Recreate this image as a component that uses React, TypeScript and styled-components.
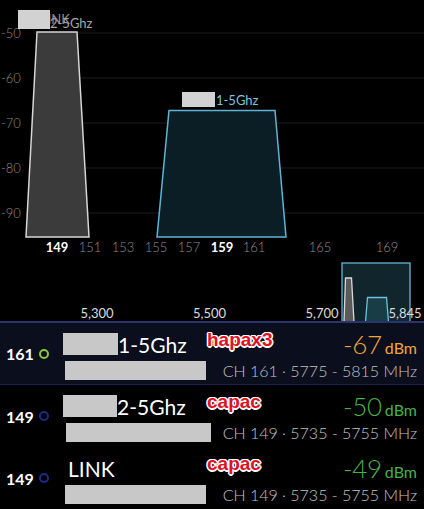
import * as React from "react";
import styled, { createGlobalStyle } from "styled-components";

const GlobalStyle = createGlobalStyle`
  html, body {
    margin: 0;
    padding: 0;
    background: #000;
  }
  body {
    font-family: "Lato", "Noto Sans", sans-serif;
    color: #fff;
  }
`;

const Screen = styled.div`
  width: 424px;
  height: 509px;
  background: #000;
  overflow: hidden;
  display: flex;
  flex-direction: column;
`;

const ChartSvg = styled.svg`
  display: block;
  flex: none;
  font-family: "Lato", "Noto Sans", sans-serif;
`;

const List = styled.div`
  display: flex;
  flex-direction: column;
`;

const Row = styled.div<{ $active?: boolean }>`
  display: grid;
  grid-template-columns: 63px 1fr;
  box-sizing: border-box;
  height: ${(p) => (p.$active ? "64px" : "62px")};
  background: ${(p) => (p.$active ? "#0b0e1c" : "#000")};
  border-top: ${(p) => (p.$active ? "2px solid #2a356f" : "none")};
  border-bottom: ${(p) => (p.$active ? "1px solid #1b2451" : "none")};
`;

const Channel = styled.div`
  display: flex;
  align-items: center;
  padding-left: 6px;
`;

const ChannelNum = styled.span`
  width: 33px;
  font-size: 16px;
  font-weight: 700;
  color: #fff;
`;

const Dot = styled.span<{ $color: string }>`
  width: 6px;
  height: 6px;
  border-radius: 50%;
  border: 2px solid ${(p) => p.$color};
`;

const Body = styled.div`
  display: flex;
  flex-direction: column;
  padding: 7px 7px 0 0;
`;

const TopLine = styled.div`
  display: flex;
  align-items: center;
  height: 28px;
`;

const BottomLine = styled.div`
  display: flex;
  align-items: center;
  height: 20px;
  margin-top: 2px;
`;

const Name = styled.div`
  width: 144px;
  display: flex;
  align-items: center;
  font-size: 21px;
  color: #fff;
  white-space: nowrap;
`;

const Redact = styled.span<{ $w: number; $h: number; $ml?: number }>`
  display: inline-block;
  width: ${(p) => p.$w}px;
  height: ${(p) => p.$h}px;
  margin-left: ${(p) => p.$ml ?? 0}px;
  background: #c8c8c8;
  flex: none;
`;

const PlainName = styled.span`
  margin-left: 5px;
`;

const Tag = styled.span`
  align-self: flex-start;
  margin-top: -1px;
  font-family: "Liberation Sans", Arial, sans-serif;
  font-weight: 700;
  font-size: 19px;
  line-height: 22px;
  color: #e3101e;
  text-shadow: 1.5px 0 0 #fff, -1.5px 0 0 #fff, 0 1.5px 0 #fff, 0 -1.5px 0 #fff,
    1px 1px 0 #fff, -1px -1px 0 #fff, 1px -1px 0 #fff, -1px 1px 0 #fff;
`;

const Signal = styled.div<{ $color: string }>`
  margin-left: auto;
  display: flex;
  align-items: baseline;
  color: ${(p) => p.$color};
  font-weight: 300;
`;

const Level = styled.span`
  font-size: 26px;
  letter-spacing: -0.3px;
`;

const Unit = styled.span`
  font-size: 16px;
  margin-left: 3px;
  font-weight: 400;
`;

const ChannelInfo = styled.span`
  margin-left: auto;
  font-size: 16px;
  font-weight: 300;
  color: #c2c2c2;
  white-space: nowrap;
`;

const gridLines = [
  { y: 33, label: "-50" },
  { y: 78, label: "-60" },
  { y: 123, label: "-70" },
  { y: 168, label: "-80" },
  { y: 213, label: "-90" },
];

const channels = [
  { x: 57, label: "149", bold: true },
  { x: 90, label: "151" },
  { x: 123, label: "153" },
  { x: 156, label: "155" },
  { x: 189, label: "157" },
  { x: 222, label: "159", bold: true },
  { x: 254, label: "161" },
  { x: 320, label: "165" },
  { x: 387, label: "169" },
];

const Spectrum = () => (
  <ChartSvg width={424} height={258} viewBox="0 0 424 258">
    {gridLines.map((g) => (
      <g key={g.label}>
        <line x1={33} x2={424} y1={g.y} y2={g.y} stroke="#1c1c1c" strokeWidth={1} />
        <text x={1} y={g.y + 4.5} fontSize={13} fontWeight={300} fill="#8a8a8a">
          {g.label}
        </text>
      </g>
    ))}

    {/* LINK and 2-5Ghz both sit on ch 149, so their labels stack */}
    <polygon
      points="26,237 37,32 77,32 89,237"
      fill="#3b3b3b"
      stroke="#d6d6d6"
      strokeWidth={1.5}
    />
    <text x={41} y={24} fontSize={13} fill="#8f8f8f">LINK</text>
    <text x={50} y={28} fontSize={13} fill="#a5a5a5">2-5Ghz</text>
    <rect x={18} y={10} width={32} height={19} fill="#d2d2d2" />

    {/* 1-5Ghz on ch 161 */}
    <polygon
      points="157,237 169,110.5 275,110.5 286,237"
      fill="#0c1e25"
      stroke="#5fb4d6"
      strokeWidth={1.5}
    />
    <rect x={182} y={92} width={33} height={15} fill="#d2d2d2" />
    <text x={216} y={105} fontSize={13} fill="#7ec2de">1-5Ghz</text>

    {channels.map((c) => (
      <text
        key={c.label}
        x={c.x}
        y={252}
        textAnchor="middle"
        fontSize={13}
        fontWeight={c.bold ? 700 : 300}
        fill={c.bold ? "#fff" : "#8f8f8f"}
      >
        {c.label}
      </text>
    ))}
  </ChartSvg>
);

const freqs = [
  { x: 97, label: "5,300" },
  { x: 209.5, label: "5,500" },
  { x: 322, label: "5,700" },
  { x: 405, label: "5,845" },
];

const Overview = () => (
  <ChartSvg width={424} height={63} viewBox="0 0 424 63">
    <rect x={342} y={5} width={68} height={62} fill="#11252c" stroke="#64b4d2" strokeWidth={1.3} />
    <polygon points="344,64 345.5,20 351.5,20 354,64" fill="#5a5a5a" stroke="#d8d8d8" strokeWidth={1.3} />
    <polygon points="365.5,64 367.5,39.5 386.5,39.5 388.5,64" fill="#1a3c46" stroke="#6cc0de" strokeWidth={1.3} />
    {freqs.map((f) => (
      <text key={f.label} x={f.x} y={60} textAnchor="middle" fontSize={13} fill="#dcdcdc">
        {f.label}
      </text>
    ))}
  </ChartSvg>
);

type Network = {
  channel: string;
  dot: string;
  nameBox?: number;
  name: string;
  tag: string;
  level: string;
  color: string;
  infoBox: number;
  infoMl: number;
  info: string;
  active?: boolean;
};

const networks: Network[] = [
  {
    channel: "161",
    dot: "#8dc63f",
    nameBox: 55,
    name: "1-5Ghz",
    tag: "hapax3",
    level: "-67",
    color: "#f2a53b",
    infoBox: 141,
    infoMl: 2,
    info: "CH 161 · 5775 - 5815 MHz",
    active: true,
  },
  {
    channel: "149",
    dot: "#1d2a8c",
    nameBox: 54,
    name: "2-5Ghz",
    tag: "capac",
    level: "-50",
    color: "#47b14a",
    infoBox: 145,
    infoMl: 3,
    info: "CH 149 · 5735 - 5755 MHz",
  },
  {
    channel: "149",
    dot: "#1d2a8c",
    name: "LINK",
    tag: "capac",
    level: "-49",
    color: "#47b14a",
    infoBox: 141,
    infoMl: 2,
    info: "CH 149 · 5735 - 5755 MHz",
  },
];

const NetworkRow = ({ n }: { n: Network }) => (
  <Row $active={n.active}>
    <Channel>
      <ChannelNum>{n.channel}</ChannelNum>
      <Dot $color={n.dot} />
    </Channel>
    <Body>
      <TopLine>
        <Name>
          {n.nameBox ? (
            <>
              <Redact $w={n.nameBox} $h={22} />
              {n.name}
            </>
          ) : (
            <PlainName>{n.name}</PlainName>
          )}
        </Name>
        <Tag>{n.tag}</Tag>
        <Signal $color={n.color}>
          <Level>{n.level}</Level>
          <Unit>dBm</Unit>
        </Signal>
      </TopLine>
      <BottomLine>
        <Redact $w={n.infoBox} $h={19} $ml={n.infoMl} />
        <ChannelInfo>{n.info}</ChannelInfo>
      </BottomLine>
    </Body>
  </Row>
);

const App = () => (
  <Screen>
    <GlobalStyle />
    <Spectrum />
    <Overview />
    <List>
      {networks.map((n, i) => (
        <NetworkRow key={i} n={n} />
      ))}
    </List>
  </Screen>
);

export default App;
